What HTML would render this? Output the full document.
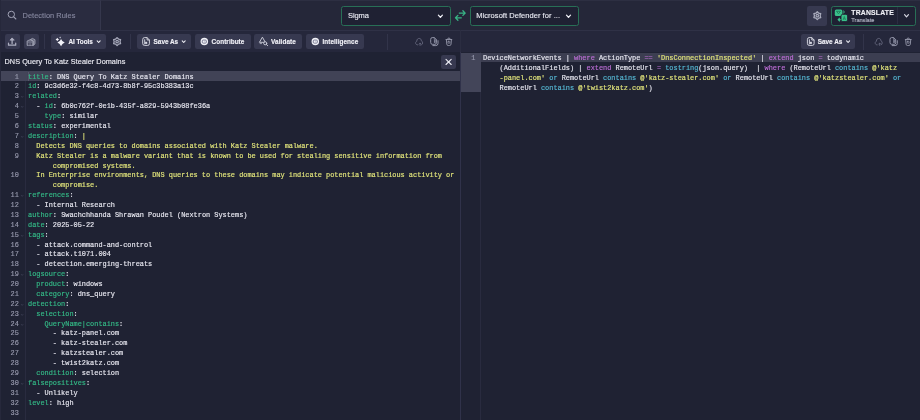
<!DOCTYPE html>
<html lang="en"><head><meta charset="utf-8"><title>Detection Rules</title>
<style>
html,body{margin:0;padding:0;}
body{width:920px;height:420px;overflow:hidden;background:#1f2233;position:relative;font-family:"Liberation Sans",sans-serif;}
div,span.t,span.ic{position:absolute;box-sizing:border-box;}
#app{left:0;top:0;width:920px;height:420px;will-change:transform;filter:blur(.4px);}
.hdr{background:#252739;border-top:1px solid #2d2f42;}
.srch{background:#2a2c40;border-right:1px solid #35374c;border-bottom:1px solid #35374c;border-top:1px solid #303246;}
.tb{background:#25273b;border-top:1px solid #2f3146;}
.dd{border:1px solid #286f56;border-radius:2.500px;background:#1f2133;}
.btn{background:#373950;border-radius:2.200px;}
.vsep{background:#32344a;}
.vsep2{background:#2b2d41;}
.edge{background:#26283b;}
.psep{background:#30324a;}
.gut{background:#1f2233;border-right:1px solid #292b3f;}
.gal{background:#434559;}
.al{background:#3c3e51;}
.cur{background:#55576b;}
.t{white-space:pre;line-height:1;}
.ui{font-family:"Liberation Sans",sans-serif;-webkit-text-stroke:.14px currentColor;}
.b{font-weight:bold;}
.ov{position:absolute;left:0;top:0;pointer-events:none;}
.ic svg{display:block;width:100%;height:100%;overflow:visible;}
.ln,.cl{font-family:"Liberation Mono",monospace;font-size:7.5px;letter-spacing:0.0000px;line-height:9.88px;height:9.88px;white-space:pre;}
.ln{left:0;text-align:right;color:#989aae;transform:scaleX(0.9198);transform-origin:100% 0;}
.cl{transform:scaleX(0.9198);transform-origin:0 0;}
.cl,.ln{-webkit-text-stroke:.16px currentColor;}
.cl{color:#e8e8f1;}
.fold{width:2.4px;height:1.7px;margin-top:4.1px;}
.fold svg{display:block;width:100%;height:100%;overflow:visible;}
.k{color:#34bc88;}
.v{color:#e8e8f1;}
.y{color:#e3e67c;}
.p{color:#bf6fd8;}
.cl .b{color:#57bad5;font-weight:normal;}
</style></head>
<body>
<div id="app">
<div class="hdr" style="left:0.00px;top:0.00px;width:920.00px;height:30.50px;"></div>
<div class="srch" style="left:0.00px;top:0.00px;width:101.00px;height:30.50px;"></div>
<span class="t ui" id="t0" style="left:22.56px;top:11.93px;font-size:7.4px;color:#85879e;letter-spacing:0.048px">Detection Rules</span>
<div class="dd" style="left:341.40px;top:5.80px;width:109.60px;height:20.40px;"></div>
<span class="t ui" id="t1" style="left:347.95px;top:11.83px;font-size:7.5px;color:#e6e7f0;letter-spacing:-0.053px">Sigma</span>
<div class="dd" style="left:470.20px;top:5.80px;width:108.80px;height:20.40px;"></div>
<span class="t ui" id="t2" style="left:476.25px;top:11.83px;font-size:7.5px;color:#e6e7f0;letter-spacing:0.049px">Microsoft Defender for ...</span>
<div class="btn" style="left:807.40px;top:5.80px;width:19.60px;height:20.00px;"></div>
<div class="dd" style="left:831.00px;top:5.80px;width:84.80px;height:20.40px;"></div>
<span class="t ui b" id="t3" style="left:851.29px;top:9.81px;font-size:6.85px;color:#f0f0f6;letter-spacing:0.187px">TRANSLATE</span>
<span class="t ui" id="t4" style="left:851.36px;top:18.34px;font-size:5.7px;color:#b4b6c6;letter-spacing:-0.057px">Translate</span>
<div class="vsep2" style="left:897.00px;top:7.00px;width:0.80px;height:17.40px;"></div>
<div class="tb" style="left:0.00px;top:30.30px;width:920.00px;height:22.00px;"></div>
<div class="vsep2" style="left:459.60px;top:30.30px;width:0.80px;height:22.00px;"></div>
<div class="btn" style="left:4.90px;top:34.00px;width:14.90px;height:15.20px;"></div>
<div class="btn" style="left:23.80px;top:34.00px;width:14.80px;height:15.20px;"></div>
<div class="vsep" style="left:44.20px;top:34.00px;width:0.80px;height:15.40px;"></div>
<div class="btn" style="left:51.00px;top:34.00px;width:54.70px;height:15.20px;"></div>
<span class="t ui b" id="t5" style="left:68.52px;top:39.18px;font-size:6.4px;color:#f0f0f6;letter-spacing:-0.071px">AI Tools</span>
<div class="vsep" style="left:130.40px;top:34.00px;width:0.80px;height:15.40px;"></div>
<div class="btn" style="left:137.00px;top:34.00px;width:53.80px;height:15.20px;"></div>
<span class="t ui b" id="t6" style="left:153.62px;top:39.18px;font-size:6.4px;color:#f0f0f6;letter-spacing:-0.025px">Save As</span>
<div class="btn" style="left:194.90px;top:34.00px;width:55.70px;height:15.20px;"></div>
<span class="t ui b" id="t7" style="left:211.62px;top:39.18px;font-size:6.4px;color:#f0f0f6;letter-spacing:0.046px">Contribute</span>
<div class="btn" style="left:254.00px;top:34.00px;width:48.00px;height:15.20px;"></div>
<span class="t ui b" id="t8" style="left:271.12px;top:39.18px;font-size:6.4px;color:#f0f0f6;letter-spacing:0.089px">Validate</span>
<div class="btn" style="left:306.10px;top:34.00px;width:58.30px;height:15.20px;"></div>
<span class="t ui b" id="t9" style="left:322.42px;top:39.18px;font-size:6.4px;color:#f0f0f6;letter-spacing:0.058px">Intelligence</span>
<div class="vsep" style="left:387.30px;top:33.60px;width:0.80px;height:16.00px;"></div>
<div class="btn" style="left:801.10px;top:34.00px;width:54.40px;height:15.20px;"></div>
<span class="t ui b" id="t10" style="left:817.72px;top:39.18px;font-size:6.4px;color:#f0f0f6;letter-spacing:-0.010px">Save As</span>
<div class="vsep" style="left:862.90px;top:33.60px;width:0.80px;height:16.00px;"></div>
<span class="t ui" id="t11" style="left:4.56px;top:58.03px;font-size:7.3px;color:#ececf4;letter-spacing:0.041px">DNS Query To Katz Stealer Domains</span>
<div class="btn" style="left:440.80px;top:54.50px;width:15.50px;height:14.90px;"></div>
<div class="edge" style="left:0.00px;top:0.00px;width:1.00px;height:420.00px;"></div>
<div class="gut" style="left:1.10px;top:71.20px;width:25.00px;height:348.80px;"></div>
<div class="gal" style="left:1.10px;top:71.20px;width:25.50px;height:9.90px;"></div>
<div class="al" style="left:26.60px;top:71.20px;width:433.40px;height:9.90px;background:#414356;"></div>
<div class="cur" style="left:27.90px;top:71.80px;width:0.70px;height:8.80px;"></div>
<div class="psep" style="left:460.00px;top:52.30px;width:1.00px;height:367.70px;"></div>
<div class="gut" style="left:461.00px;top:52.30px;width:20.00px;height:367.70px;"></div>
<div class="gal" style="left:461.00px;top:52.50px;width:20.00px;height:39.60px;"></div>
<div class="al" style="left:481.00px;top:52.50px;width:439.00px;height:9.90px;"></div>
<svg class="ov" width="920" height="420" viewBox="0 0 920 420"><circle cx="11.30" cy="14.40" r="3.200" fill="none" stroke="#a0a2b5" stroke-width="1"/><path d="M13.700 16.900L15.900 19" stroke="#a0a2b5" stroke-width="1.050" stroke-linecap="round"/>
<path d="M438.40 15.15L440.40 17.45L442.40 15.15" fill="none" stroke="#f0f1f7" stroke-width="1.25" stroke-linecap="round" stroke-linejoin="round"/>
<path d="M566.50 15.15L568.50 17.45L570.50 15.15" fill="none" stroke="#f0f1f7" stroke-width="1.25" stroke-linecap="round" stroke-linejoin="round"/>
<path d="M904.55 14.65L906.50 16.95L908.45 14.65" fill="none" stroke="#d6d7e2" stroke-width="1.15" stroke-linecap="round" stroke-linejoin="round"/>
<g fill="none" stroke="#38b586" stroke-width="1.300" stroke-linecap="round" stroke-linejoin="round"><path d="M459.300 13.100H465M462.900 10.800L465.200 13.100L462.900 15.400"/><path d="M461.300 17.800H455.700M457.900 15.400L455.500 17.800L457.900 20.200"/></g>
<path d="M817.30 11.70L815.88 13.18L813.88 13.68L814.45 15.65L813.88 17.62L815.88 18.12L817.30 19.60L818.72 18.12L820.72 17.63L820.15 15.65L820.72 13.68L818.72 13.18Z" fill="none" stroke="#a9abbc" stroke-width="1.3" stroke-linejoin="round"/><circle cx="817.3" cy="15.65" r="1.25" fill="none" stroke="#a9abbc" stroke-width="1.17"/>
<g><rect x="834.800" y="9.500" width="7.600" height="6.400" rx="1.500" fill="#39c18a"/><path d="M836.600 11.300L838.500 13.800L840.400 11.300M836.300 11.300H840.700" stroke="#1f7f5c" stroke-width="0.900" fill="none"/><path d="M843.300 10.900L844.600 12L843.300 13.100" stroke="#39c18a" stroke-width="0.900" fill="none" stroke-linecap="round"/><rect x="841" y="14.300" width="6.600" height="7.300" rx="1.700" fill="#39c18a" stroke="#1f2133" stroke-width="0.900"/><path d="M843.200 19.900L844.300 16.500L845.500 19.900M843.600 18.800H845.100" stroke="#1f7f5c" stroke-width="0.850" fill="none"/><path d="M840.300 19.600H838.300M839.600 18.200L838.100 19.600L839.600 21" stroke="#39c18a" stroke-width="1.050" fill="none" stroke-linecap="round" stroke-linejoin="round"/></g>
<g fill="none" stroke="#adafc0" stroke-linecap="round" stroke-linejoin="round"><path d="M8.500 43.200V45.200H15.700V43.200" stroke-width="1.200"/><path d="M12.100 43.600V39" stroke-width="1.300"/><path d="M10.200 39.900L12.100 37.900L14 39.900Z" fill="#adafc0" stroke-width="0.800"/></g>
<g fill="#8f91a4" fill-opacity=".55" stroke="#a5a7b8" stroke-width="0.800" stroke-linejoin="round"><path d="M27.100 41L30.300 39.600L33.200 41V45.400H27.100Z"/><path d="M30.300 39.600L32.400 38.400L35 39.700V43.900L33.200 45.400V41Z"/><path d="M28.800 43V45.400M31.300 43V45.400" stroke="#2f3145" stroke-width="0.700"/></g>
<path d="M61.05 38.90Q62.07 41.58 64.75 42.60Q62.07 43.62 61.05 46.30Q60.03 43.62 57.35 42.60Q60.03 41.58 61.05 38.90Z" fill="#f2f2f8"/>
<path d="M57.30 37.85Q57.78 39.12 59.05 39.60Q57.78 40.08 57.30 41.35Q56.82 40.08 55.55 39.60Q56.82 39.12 57.30 37.85Z" fill="#f2f2f8"/>
<path d="M60.15 36.60Q60.46 37.24 61.10 37.55Q60.46 37.86 60.15 38.50Q59.84 37.86 59.20 37.55Q59.84 37.24 60.15 36.60Z" fill="#b9bbca"/>
<path d="M97.15 40.80L98.65 42.50L100.15 40.80" fill="none" stroke="#eeeff5" stroke-width="1.05" stroke-linecap="round" stroke-linejoin="round"/>
<path d="M182.20 40.80L183.70 42.50L185.20 40.80" fill="none" stroke="#eeeff5" stroke-width="1.05" stroke-linecap="round" stroke-linejoin="round"/>
<path d="M846.60 40.80L848.10 42.50L849.60 40.80" fill="none" stroke="#eeeff5" stroke-width="1.05" stroke-linecap="round" stroke-linejoin="round"/>
<path d="M117.10 37.60L115.65 39.09L113.64 39.60L114.20 41.60L113.64 43.60L115.65 44.11L117.10 45.60L118.55 44.11L120.56 43.60L120.00 41.60L120.56 39.60L118.55 39.09Z" fill="none" stroke="#a4a6b8" stroke-width="1.35" stroke-linejoin="round"/><circle cx="117.1" cy="41.6" r="1.25" fill="none" stroke="#a4a6b8" stroke-width="1.22"/>
<g transform="translate(142.20 37.10)" fill="none" stroke="#d6d7e2" stroke-width="0.95" stroke-linejoin="round" stroke-linecap="round"><path d="M0.5 2.2A1.7 1.7 0 0 1 2.2 0.5H4.9L7.2 2.9V6.6A1.7 1.7 0 0 1 5.500 8.300H2.200A1.700 1.700 0 0 1 0.500 6.600Z"/><path d="M2.500 2.600V6.800"/><rect x="2.900" y="4.700" width="2.100" height="2.100" fill="#d6d7e2" stroke="none"/><path d="M4.900 0.700V2.900H7"/></g>
<g transform="translate(806.90 37.10)" fill="none" stroke="#d6d7e2" stroke-width="0.95" stroke-linejoin="round" stroke-linecap="round"><path d="M0.5 2.2A1.7 1.7 0 0 1 2.2 0.5H4.9L7.2 2.9V6.6A1.7 1.7 0 0 1 5.500 8.300H2.200A1.700 1.700 0 0 1 0.500 6.600Z"/><path d="M2.500 2.600V6.800"/><rect x="2.900" y="4.700" width="2.100" height="2.100" fill="#d6d7e2" stroke="none"/><path d="M4.900 0.700V2.900H7"/></g>
<circle cx="204.3" cy="41.6" r="3.75" fill="#f0f0f6"/><rect x="202.25" y="40.05" width="4.1" height="3.1" rx="1" fill="none" stroke="#70728a" stroke-width="0.9"/><path d="M204.10 41.70h1.2" stroke="#a5a7b6" stroke-width="0.6"/>
<circle cx="315.3" cy="41.6" r="3.75" fill="#f0f0f6"/><rect x="313.25" y="40.05" width="4.1" height="3.1" rx="1" fill="none" stroke="#70728a" stroke-width="0.9"/><path d="M315.10 41.70h1.2" stroke="#a5a7b6" stroke-width="0.6"/>
<g fill="none" stroke="#cbccd9" stroke-width="0.950" stroke-linejoin="round" stroke-linecap="round"><path d="M262.600 37.500L265.300 42.300H259.800Z"/><circle cx="265.200" cy="43.300" r="1.550" fill="#373950"/><path d="M266.400 44.500L267.700 45.700"/><path d="M260.100 43.600H261.600" stroke-width="0.700"/></g>
<g transform="translate(414.90 37.90)" fill="none" stroke="#62647a" stroke-width="0.95" stroke-linejoin="round" stroke-linecap="round"><path d="M2.600 7C0.300 7 0 4 1.900 3.400C1.700 1.300 3.300 0.450 4.300 0.500C5.700 0.550 6.500 1.700 6.400 2.900C8.300 3.500 8 6.500 6.800 6.900"/><path d="M5.200 7.500V5.300M4.200 6.200L5.200 5.200L6.200 6.200"/></g>
<g transform="translate(430.20 37.10)" fill="none" stroke="#9294a8" stroke-width="1" stroke-linejoin="round" stroke-linecap="round"><path d="M0.500 2A1.500 1.500 0 0 1 2 0.500H4.200L6.200 2.600V5.700A1.500 1.500 0 0 1 4.700 7.200H2A1.500 1.500 0 0 1 0.500 5.700Z"/><path d="M2.600 8.500H5.600A2.200 2.200 0 0 0 7.800 6.300V3.600"/><path d="M4.100 0.700V2.700H6" stroke-width="0.7"/><rect x="3.700" y="3" width="1.700" height="2.800" fill="#9294a8" stroke="none" opacity=".85"/></g>
<g transform="translate(445.50 37.20)" fill="none" stroke="#9193a7" stroke-width="0.95" stroke-linejoin="round" stroke-linecap="round"><path d="M0.500 2.300H6.300"/><path d="M1.600 2.200Q3.400 -0.900 5.200 2.200"/><path d="M0.900 2.600L1.300 7A1.400 1.400 0 0 0 2.700 8.300H4.100A1.400 1.400 0 0 0 5.500 7L5.900 2.600"/><rect x="2.500" y="4.100" width="1.800" height="1.900" rx=".3" stroke-width=".75"/></g>
<g transform="translate(874.50 37.90)" fill="none" stroke="#62647a" stroke-width="0.95" stroke-linejoin="round" stroke-linecap="round"><path d="M2.600 7C0.300 7 0 4 1.900 3.400C1.700 1.300 3.300 0.450 4.300 0.500C5.700 0.550 6.500 1.700 6.400 2.900C8.300 3.500 8 6.500 6.800 6.900"/><path d="M5.200 7.500V5.300M4.200 6.200L5.200 5.200L6.200 6.200"/></g>
<g transform="translate(889.50 37.10)" fill="none" stroke="#9294a8" stroke-width="1" stroke-linejoin="round" stroke-linecap="round"><path d="M0.500 2A1.500 1.500 0 0 1 2 0.500H4.200L6.200 2.600V5.700A1.500 1.500 0 0 1 4.700 7.200H2A1.500 1.500 0 0 1 0.500 5.700Z"/><path d="M2.600 8.500H5.600A2.200 2.200 0 0 0 7.800 6.300V3.600"/><path d="M4.100 0.700V2.700H6" stroke-width="0.7"/><rect x="3.700" y="3" width="1.700" height="2.800" fill="#9294a8" stroke="none" opacity=".85"/></g>
<g transform="translate(904.80 37.20)" fill="none" stroke="#9193a7" stroke-width="0.95" stroke-linejoin="round" stroke-linecap="round"><path d="M0.500 2.300H6.300"/><path d="M1.600 2.200Q3.400 -0.900 5.200 2.200"/><path d="M0.900 2.600L1.300 7A1.400 1.400 0 0 0 2.700 8.300H4.100A1.400 1.400 0 0 0 5.500 7L5.900 2.600"/><rect x="2.500" y="4.100" width="1.800" height="1.900" rx=".3" stroke-width=".75"/></g>
<path d="M446 59.300L451.200 64.500M451.200 59.300L446 64.500" stroke="#e9eaf2" stroke-width="1.100" stroke-linecap="round"/></svg>
<div class="ln" style="top:72.60px;width:18.90px">1</div>
<div class="cl" style="top:72.60px;left:27.50px"><span class="k">title</span><span class="v">: DNS Query To Katz Stealer Domains</span></div>
<div class="ln" style="top:82.48px;width:18.90px">2</div>
<div class="cl" style="top:82.48px;left:27.50px"><span class="k">id</span><span class="v">: 9c3d6e32-f4c8-4d73-8b8f-95c3b383a13c</span></div>
<div class="ln" style="top:92.36px;width:18.90px">3</div>
<div class="fold" style="top:92.36px;left:21.40px"><svg viewBox="0 0 24 17" fill="none" stroke="#4a4c63" stroke-width="6"><path d="M2 2l10 12 10-12"/></svg></div>
<div class="cl" style="top:92.36px;left:27.50px"><span class="k">related</span><span class="v">:</span></div>
<div class="ln" style="top:102.24px;width:18.90px">4</div>
<div class="fold" style="top:102.24px;left:21.40px"><svg viewBox="0 0 24 17" fill="none" stroke="#4a4c63" stroke-width="6"><path d="M2 2l10 12 10-12"/></svg></div>
<div class="cl" style="top:102.24px;left:27.50px"><span class="v">  - </span><span class="k">id</span><span class="v">: 6b0c762f-0e1b-435f-a829-5943b08fe36a</span></div>
<div class="ln" style="top:112.12px;width:18.90px">5</div>
<div class="cl" style="top:112.12px;left:27.50px"><span class="v">    </span><span class="k">type</span><span class="v">: similar</span></div>
<div class="ln" style="top:122.00px;width:18.90px">6</div>
<div class="cl" style="top:122.00px;left:27.50px"><span class="k">status</span><span class="v">: experimental</span></div>
<div class="ln" style="top:131.88px;width:18.90px">7</div>
<div class="fold" style="top:131.88px;left:21.40px"><svg viewBox="0 0 24 17" fill="none" stroke="#4a4c63" stroke-width="6"><path d="M2 2l10 12 10-12"/></svg></div>
<div class="cl" style="top:131.88px;left:27.50px"><span class="k">description</span><span class="v">: </span><span class="y">|</span></div>
<div class="ln" style="top:141.76px;width:18.90px">8</div>
<div class="cl" style="top:141.76px;left:27.50px"><span class="y">  Detects DNS queries to domains associated with Katz Stealer malware.</span></div>
<div class="ln" style="top:151.64px;width:18.90px">9</div>
<div class="cl" style="top:151.64px;left:27.50px"><span class="y">  Katz Stealer is a malware variant that is known to be used for stealing sensitive information from </span></div>
<div class="cl" style="top:161.52px;left:27.50px"><span class="y">      compromised systems.</span></div>
<div class="ln" style="top:171.40px;width:18.90px">10</div>
<div class="cl" style="top:171.40px;left:27.50px"><span class="y">  In Enterprise environments, DNS queries to these domains may indicate potential malicious activity or </span></div>
<div class="cl" style="top:181.28px;left:27.50px"><span class="y">      compromise.</span></div>
<div class="ln" style="top:191.16px;width:18.90px">11</div>
<div class="fold" style="top:191.16px;left:21.40px"><svg viewBox="0 0 24 17" fill="none" stroke="#4a4c63" stroke-width="6"><path d="M2 2l10 12 10-12"/></svg></div>
<div class="cl" style="top:191.16px;left:27.50px"><span class="k">references</span><span class="v">:</span></div>
<div class="ln" style="top:201.04px;width:18.90px">12</div>
<div class="cl" style="top:201.04px;left:27.50px"><span class="v">  - Internal Research</span></div>
<div class="ln" style="top:210.92px;width:18.90px">13</div>
<div class="cl" style="top:210.92px;left:27.50px"><span class="k">author</span><span class="v">: Swachchhanda Shrawan Poudel (Nextron Systems)</span></div>
<div class="ln" style="top:220.80px;width:18.90px">14</div>
<div class="cl" style="top:220.80px;left:27.50px"><span class="k">date</span><span class="v">: 2025-05-22</span></div>
<div class="ln" style="top:230.68px;width:18.90px">15</div>
<div class="fold" style="top:230.68px;left:21.40px"><svg viewBox="0 0 24 17" fill="none" stroke="#4a4c63" stroke-width="6"><path d="M2 2l10 12 10-12"/></svg></div>
<div class="cl" style="top:230.68px;left:27.50px"><span class="k">tags</span><span class="v">:</span></div>
<div class="ln" style="top:240.56px;width:18.90px">16</div>
<div class="cl" style="top:240.56px;left:27.50px"><span class="v">  - attack.command-and-control</span></div>
<div class="ln" style="top:250.44px;width:18.90px">17</div>
<div class="cl" style="top:250.44px;left:27.50px"><span class="v">  - attack.t1071.004</span></div>
<div class="ln" style="top:260.32px;width:18.90px">18</div>
<div class="cl" style="top:260.32px;left:27.50px"><span class="v">  - detection.emerging-threats</span></div>
<div class="ln" style="top:270.20px;width:18.90px">19</div>
<div class="fold" style="top:270.20px;left:21.40px"><svg viewBox="0 0 24 17" fill="none" stroke="#4a4c63" stroke-width="6"><path d="M2 2l10 12 10-12"/></svg></div>
<div class="cl" style="top:270.20px;left:27.50px"><span class="k">logsource</span><span class="v">:</span></div>
<div class="ln" style="top:280.08px;width:18.90px">20</div>
<div class="cl" style="top:280.08px;left:27.50px"><span class="v">  </span><span class="k">product</span><span class="v">: windows</span></div>
<div class="ln" style="top:289.96px;width:18.90px">21</div>
<div class="cl" style="top:289.96px;left:27.50px"><span class="v">  </span><span class="k">category</span><span class="v">: dns_query</span></div>
<div class="ln" style="top:299.84px;width:18.90px">22</div>
<div class="fold" style="top:299.84px;left:21.40px"><svg viewBox="0 0 24 17" fill="none" stroke="#4a4c63" stroke-width="6"><path d="M2 2l10 12 10-12"/></svg></div>
<div class="cl" style="top:299.84px;left:27.50px"><span class="k">detection</span><span class="v">:</span></div>
<div class="ln" style="top:309.72px;width:18.90px">23</div>
<div class="fold" style="top:309.72px;left:21.40px"><svg viewBox="0 0 24 17" fill="none" stroke="#4a4c63" stroke-width="6"><path d="M2 2l10 12 10-12"/></svg></div>
<div class="cl" style="top:309.72px;left:27.50px"><span class="v">  </span><span class="k">selection</span><span class="v">:</span></div>
<div class="ln" style="top:319.60px;width:18.90px">24</div>
<div class="fold" style="top:319.60px;left:21.40px"><svg viewBox="0 0 24 17" fill="none" stroke="#4a4c63" stroke-width="6"><path d="M2 2l10 12 10-12"/></svg></div>
<div class="cl" style="top:319.60px;left:27.50px"><span class="v">    </span><span class="k">QueryName|contains</span><span class="v">:</span></div>
<div class="ln" style="top:329.48px;width:18.90px">25</div>
<div class="cl" style="top:329.48px;left:27.50px"><span class="v">      - katz-panel.com</span></div>
<div class="ln" style="top:339.36px;width:18.90px">26</div>
<div class="cl" style="top:339.36px;left:27.50px"><span class="v">      - katz-stealer.com</span></div>
<div class="ln" style="top:349.24px;width:18.90px">27</div>
<div class="cl" style="top:349.24px;left:27.50px"><span class="v">      - katzstealer.com</span></div>
<div class="ln" style="top:359.12px;width:18.90px">28</div>
<div class="cl" style="top:359.12px;left:27.50px"><span class="v">      - twist2katz.com</span></div>
<div class="ln" style="top:369.00px;width:18.90px">29</div>
<div class="cl" style="top:369.00px;left:27.50px"><span class="v">  </span><span class="k">condition</span><span class="v">: selection</span></div>
<div class="ln" style="top:378.88px;width:18.90px">30</div>
<div class="fold" style="top:378.88px;left:21.40px"><svg viewBox="0 0 24 17" fill="none" stroke="#4a4c63" stroke-width="6"><path d="M2 2l10 12 10-12"/></svg></div>
<div class="cl" style="top:378.88px;left:27.50px"><span class="k">falsepositives</span><span class="v">:</span></div>
<div class="ln" style="top:388.76px;width:18.90px">31</div>
<div class="cl" style="top:388.76px;left:27.50px"><span class="v">  - Unlikely</span></div>
<div class="ln" style="top:398.64px;width:18.90px">32</div>
<div class="cl" style="top:398.64px;left:27.50px"><span class="k">level</span><span class="v">: high</span></div>
<div class="ln" style="top:408.52px;width:18.90px">33</div>
<div class="ln" style="top:53.90px;width:475.30px">1</div>
<div class="cl" style="top:53.90px;left:482.60px"><span class="v">DeviceNetworkEvents | </span><span class="p">where</span><span class="v"> ActionType </span><span class="p">==</span><span class="v"> </span><span class="y">'DnsConnectionInspected'</span><span class="v"> | </span><span class="p">extend</span><span class="v"> json </span><span class="p">=</span><span class="v"> todynamic</span></div>
<div class="cl" style="top:63.78px;left:482.60px"><span class="v">    (AdditionalFields) | </span><span class="p">extend</span><span class="v"> RemoteUrl </span><span class="p">=</span><span class="v"> </span><span class="b">tostring</span><span class="v">(json.query)  | </span><span class="p">where</span><span class="v"> (RemoteUrl </span><span class="b">contains</span><span class="v"> </span><span class="y">@'katz</span></div>
<div class="cl" style="top:73.66px;left:482.60px"><span class="y">    -panel.com'</span><span class="v"> </span><span class="b">or</span><span class="v"> RemoteUrl </span><span class="b">contains</span><span class="v"> </span><span class="y">@'katz-stealer.com'</span><span class="v"> </span><span class="b">or</span><span class="v"> RemoteUrl </span><span class="b">contains</span><span class="v"> </span><span class="y">@'katzstealer.com'</span><span class="v"> </span><span class="b">or</span></div>
<div class="cl" style="top:83.54px;left:482.60px"><span class="v">    RemoteUrl </span><span class="b">contains</span><span class="v"> </span><span class="y">@'twist2katz.com'</span><span class="v">)</span></div>
</div>
</body></html>
